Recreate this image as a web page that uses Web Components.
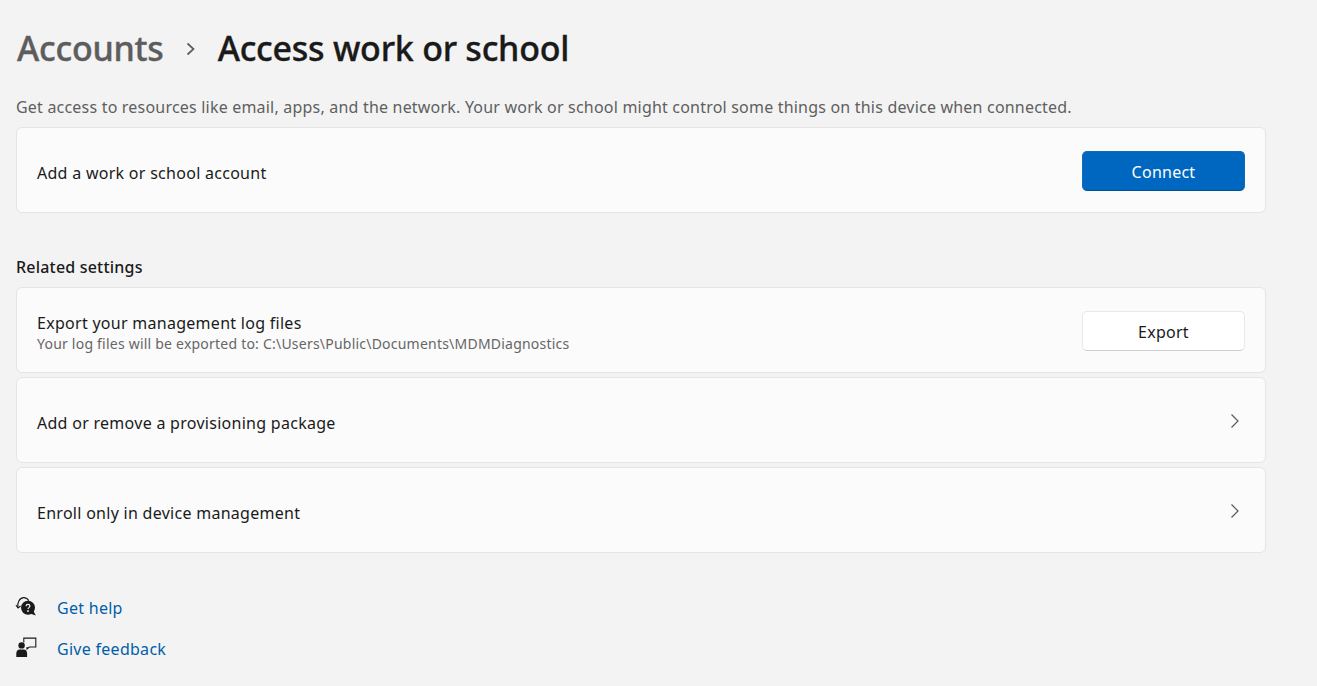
<!DOCTYPE html>
<html>
<head>
<meta charset="utf-8">
<title>Access work or school</title>
<style>
  html, body { margin: 0; height: 100%; }
  body {
    background: #f3f3f3;
    color: #1a1a1a;
    font-family: "Noto Sans", "Open Sans", sans-serif;
    overflow: hidden;
  }
</style>
</head>
<body>
<settings-page></settings-page>

<script>
// Breadcrumb title at the top of the page
class PageHeader extends HTMLElement {
  constructor() {
    super();
    this.attachShadow({ mode: 'open' });
    this.shadowRoot.innerHTML = `
      <style>
        :host { display: flex; align-items: center; height: 44px; margin-top: -1px; font-size: 34px; font-weight: 500; line-height: 44px; letter-spacing: -0.25px; -webkit-text-stroke: 0.35px; }
        .parent { color: #5d5d5d; margin-left: 1px; }
        svg { margin: 2px 21px 0 21px; display: block; }
        .current { color: #1a1a1a; }
      </style>
      <span class="parent">${this.getAttribute('parent')}</span>
      <svg width="12" height="14" viewBox="0 0 12 14"><path d="M2.5 1.5 8.5 7 2.5 12.5" fill="none" stroke="#5d5d5d" stroke-width="1.7"/></svg>
      <span class="current">${this.getAttribute('current')}</span>
    `;
  }
}

// One white-ish rounded row. Title and description on the left, anything slotted on the right.
class SettingsCard extends HTMLElement {
  constructor() {
    super();
    this.attachShadow({ mode: 'open' });
    const desc = this.getAttribute('desc');
    this.shadowRoot.innerHTML = `
      <style>
        :host {
          display: flex; align-items: center; justify-content: space-between;
          box-sizing: border-box; height: 86px; width: 1250px;
          padding: 5px 20px 0 20px;
          background: #fbfbfb; border: 1px solid #e5e5e5; border-radius: 6px;
        }
        .title { font-size: 16px; line-height: 20px; color: #1a1a1a; letter-spacing: 0.28px; }
        .desc { font-size: 14px; line-height: 18px; color: #666; letter-spacing: 0.22px; margin-top: 2px; }
      </style>
      <div>
        <div class="title">${this.getAttribute('label')}</div>
        ${desc ? `<div class="desc">${desc}</div>` : ''}
      </div>
      <slot></slot>
    `;
  }
}

class ActionButton extends HTMLElement {
  constructor() {
    super();
    this.attachShadow({ mode: 'open' });
    this.shadowRoot.innerHTML = `
      <style>
        :host {
          display: flex; align-items: center; justify-content: center;
          box-sizing: border-box; width: 163px; height: 40px; border-radius: 5px;
          padding-top: 2px;
          font-size: 16px; letter-spacing: 0.25px; background: #fff; color: #1a1a1a; margin-top: -3px;
          border: 1px solid #e8e8e8; border-bottom-color: #cfcfcf;
        }
        :host([primary]) {
          background: #0067c0; color: #fff;
          border: 1px solid #0f6cbd; border-bottom-color: #024f8f;
        }
      </style>
      <slot></slot>
    `;
  }
}

class CardChevron extends HTMLElement {
  constructor() {
    super();
    this.attachShadow({ mode: 'open' });
    this.shadowRoot.innerHTML = `
      <style>
        :host { display: block; width: 10px; height: 16px; margin: -3px 5px 0 0; }
        svg { display: block; }
      </style>
      <svg width="10" height="16" viewBox="0 0 10 16"><path d="M1.5 1.5 8 8 1.5 14.5" fill="none" stroke="#5a5a5a" stroke-width="1.2"/></svg>
    `;
  }
}

// Icon plus link text for the bottom of the page
class HelpLink extends HTMLElement {
  constructor() {
    super();
    this.attachShadow({ mode: 'open' });
    this.shadowRoot.innerHTML = `
      <style>
        :host { display: flex; align-items: center; height: 24px; font-size: 16px; letter-spacing: 0.28px; color: #005fa8; }
        .icon { width: 21px; height: 22px; margin-right: 20px; display: block; }
      </style>
      <span class="icon"><slot name="icon"></slot></span>
      <slot></slot>
    `;
  }
}

class SettingsPage extends HTMLElement {
  constructor() {
    super();
    this.attachShadow({ mode: 'open' });
    this.shadowRoot.innerHTML = `
      <style>
        :host { display: block; padding: 27px 0 0 16px; }
        .intro { font-size: 16px; line-height: 20px; color: #5f5f5f; margin: 27px 0 10px; letter-spacing: 0.2px; }
        h2 { font-size: 16px; font-weight: 500; line-height: 20px; margin: 44px 0 10px; color: #1a1a1a; letter-spacing: 0.2px; }
        .stack { display: flex; flex-direction: column; gap: 4px; }
        .links { display: flex; flex-direction: column; gap: 17px; margin-top: 43px; }
        svg { display: block; overflow: visible; }
      </style>
      <page-header parent="Accounts" current="Access work or school"></page-header>
      <div class="intro">Get access to resources like email, apps, and the network. Your work or school might control some things on this device when connected.</div>
      <settings-card label="Add a work or school account">
        <action-button primary>Connect</action-button>
      </settings-card>
      <h2>Related settings</h2>
      <div class="stack">
        <settings-card label="Export your management log files" desc="Your log files will be exported to: C:\\Users\\Public\\Documents\\MDMDiagnostics">
          <action-button>Export</action-button>
        </settings-card>
        <settings-card label="Add or remove a provisioning package"><card-chevron></card-chevron></settings-card>
        <settings-card label="Enroll only in device management"><card-chevron></card-chevron></settings-card>
      </div>
      <div class="links">
        <help-link>
          <svg slot="icon" width="21" height="22" viewBox="0 0 21 22">
            <path d="M2 11C.8 5.2 4 .6 7.8.6c2.2 0 4 1.2 5 3.2" fill="none" stroke="#1a1a1a" stroke-width="1.1"/>
            <path d="M0 8.2 2.1 11 4.6 9" fill="none" stroke="#1a1a1a" stroke-width="1.1"/>
            <circle cx="12" cy="10.8" r="7" fill="#1a1a1a"/>
            <path d="M14 16.5 19.8 18.4 17 13Z" fill="#1a1a1a"/>
            <path d="M10.1 9.2c0-1.1.8-1.8 1.9-1.8s1.9.7 1.9 1.7c0 1.5-1.9 1.5-1.9 3" fill="none" stroke="#f3f3f3" stroke-width="1.2"/>
            <circle cx="12" cy="14" r=".9" fill="#f3f3f3"/>
          </svg>
          Get help
        </help-link>
        <help-link>
          <svg slot="icon" width="21" height="22" viewBox="0 0 21 22">
            <circle cx="5.6" cy="7.4" r="3.2" fill="#1a1a1a"/>
            <path d="M.3 19v-3.6c0-2.4 1.6-3.9 3.2-3.9h4.4c1.6 0 3.2 1.5 3.2 3.9V19Z" fill="#1a1a1a"/>
            <path d="M7.8 4.5V.1H19.8V9H13.3L11 11V9" fill="none" stroke="#1a1a1a" stroke-width="1.1"/>
          </svg>
          Give feedback
        </help-link>
      </div>
    `;
  }
}

customElements.define('page-header', PageHeader);
customElements.define('settings-card', SettingsCard);
customElements.define('action-button', ActionButton);
customElements.define('card-chevron', CardChevron);
customElements.define('help-link', HelpLink);
customElements.define('settings-page', SettingsPage);
</script>
</body>
</html>
